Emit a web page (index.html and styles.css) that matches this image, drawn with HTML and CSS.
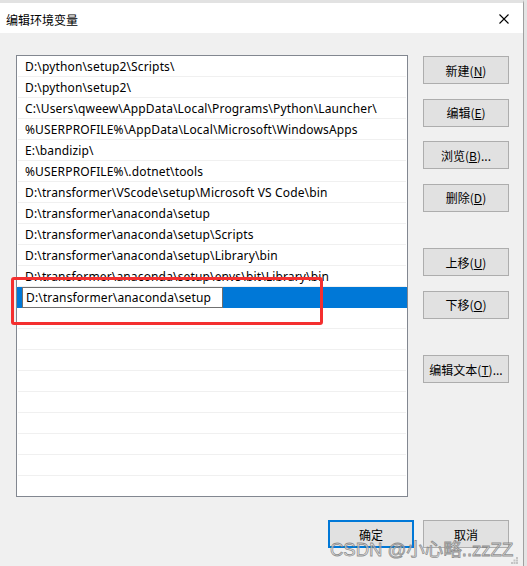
FILE: index.html
```html
<!DOCTYPE html>
<html lang="zh-CN">
<head>
<meta charset="utf-8">
<title>编辑环境变量</title>
<link rel="stylesheet" href="styles.css">
</head>
<body>
<div class="window">
  <div class="titlebar">
    <span class="title">编辑环境变量</span>
    <svg class="close" width="10" height="10" viewBox="0 0 10 10"><path d="M0.5 0.5 L9.5 9.5 M9.5 0.5 L0.5 9.5" stroke="#000" stroke-width="1.1" fill="none"/></svg>
  </div>
  <div class="content">
    <div class="main">
      <div class="list">
        <div class="row">D:\python\setup2\Scripts\</div>
        <div class="row">D:\python\setup2\</div>
        <div class="row">C:\Users\qweew\AppData\Local\Programs\Python\Launcher\</div>
        <div class="row">%USERPROFILE%\AppData\Local\Microsoft\WindowsApps</div>
        <div class="row">E:\bandizip\</div>
        <div class="row">%USERPROFILE%\.dotnet\tools</div>
        <div class="row">D:\transformer\VScode\setup\Microsoft VS Code\bin</div>
        <div class="row">D:\transformer\anaconda\setup</div>
        <div class="row">D:\transformer\anaconda\setup\Scripts</div>
        <div class="row">D:\transformer\anaconda\setup\Library\bin</div>
        <div class="row">D:\transformer\anaconda\setup\envs\bit\Library\bin</div>
        <div class="row selected"><span class="edit">D:\transformer\anaconda\setup</span></div>
        <div class="row"></div>
        <div class="row"></div>
        <div class="row"></div>
        <div class="row"></div>
        <div class="row"></div>
        <div class="row"></div>
        <div class="row"></div>
        <div class="row"></div>
        <div class="row"></div>
      </div>
      <div class="side">
        <button class="btn">新建(<u>N</u>)</button>
        <button class="btn">编辑(<u>E</u>)</button>
        <button class="btn">浏览(<u>B</u>)...</button>
        <button class="btn">删除(<u>D</u>)</button>
        <button class="btn spaced">上移(<u>U</u>)</button>
        <button class="btn">下移(<u>O</u>)</button>
        <button class="btn spaced">编辑文本(<u>T</u>)...</button>
      </div>
    </div>
    <div class="footer">
      <button class="btn default">确定</button>
      <button class="btn">取消</button>
    </div>
  </div>
  <div class="annot"></div>
  <div class="watermark">CSDN @小心略..zzZZ</div>
  <svg class="grip" width="7" height="7" viewBox="0 0 7 7">
    <rect x="5" y="0" width="2" height="2" fill="#c4c4c4"/>
    <rect x="2.5" y="2.5" width="2" height="2" fill="#c4c4c4"/>
    <rect x="5" y="2.5" width="2" height="2" fill="#c4c4c4"/>
    <rect x="0" y="5" width="2" height="2" fill="#c4c4c4"/>
    <rect x="2.5" y="5" width="2" height="2" fill="#c4c4c4"/>
    <rect x="5" y="5" width="2" height="2" fill="#c4c4c4"/>
  </svg>
</div>
</body>
</html>
```

FILE: styles.css
```css
html, body {
  margin: 0;
  padding: 0;
}
body {
  background: #e4e4e4;
  width: 527px;
  height: 566px;
  overflow: hidden;
  font-family: "Segoe UI", "Noto Sans", "Noto Sans CJK SC", sans-serif;
  font-size: 12px;
  color: #000;
}
.window {
  position: relative;
  width: 523px;
  height: 563px;
  border-top: 3px solid #e2e2e2;
  border-right: 1px solid #a0a0a0;
  border-bottom: 1px solid #6e6e6e;
  background: #f0f0f0;
  display: flex;
  flex-direction: column;
}
.titlebar {
  height: 30px;
  background: #fff;
  display: flex;
  align-items: center;
  justify-content: space-between;
  padding: 0 14px 0 6px;
  font-family: "Noto Sans CJK SC", sans-serif;
  font-size: 12px;
}
.title {
  padding-top: 2px;
}
.close {
  display: block;
  margin-top: 1px;
}
.content {
  flex: 1;
  padding: 22px 14px 0 16px;
  display: flex;
  flex-direction: column;
}
.main {
  display: flex;
  gap: 15px;
}
.list {
  width: 390px;
  height: 440px;
  border: 1px solid #828790;
  background: #fff;
  overflow: hidden;
}
.row {
  box-sizing: border-box;
  height: 21px;
  margin: 0 1px;
  border-bottom: 1px solid #f0f0f0;
  padding-left: 7px;
  padding-top: 1px;
  line-height: 20px;
  letter-spacing: 0.15px;
  white-space: nowrap;
}
.row.selected {
  background: #0078d7;
  margin: 0;
  padding-left: 5px;
  padding-top: 0;
  border-bottom-color: #0078d7;
}
.edit {
  display: block;
  box-sizing: border-box;
  width: 201px;
  height: 21px;
  background: #fff;
  border: 1px solid #707070;
  padding-left: 3px;
  line-height: 20px;
}
.side {
  display: flex;
  flex-direction: column;
  gap: 14.5px;
  padding-top: 1px;
}
.btn {
  box-sizing: border-box;
  width: 86px;
  height: 28px;
  background: #e1e1e1;
  border: 1px solid #adadad;
  font-family: "Noto Sans CJK SC", sans-serif;
  font-size: 12px;
  color: #000;
  padding: 0;
  margin: 0;
}
.btn u {
  text-underline-offset: 1px;
}
.btn.spaced {
  margin-top: 22px;
}
.btn.default {
  border: 2px solid #0078d7;
}
.footer {
  display: flex;
  justify-content: flex-end;
  gap: 9px;
  margin-top: 23px;
}
.annot {
  position: absolute;
  left: 11px;
  top: 274px;
  width: 306px;
  height: 42px;
  border: 3px solid #f42f2f;
  border-radius: 3px;
}
.watermark {
  position: absolute;
  left: 330px;
  top: 532px;
  font-family: "Liberation Sans", "Noto Sans CJK SC", sans-serif;
  font-size: 18.5px;
  color: rgba(235, 235, 235, 0.7);
  -webkit-text-stroke: 0.8px rgba(110, 110, 110, 0.75);
  white-space: nowrap;
}
.grip {
  position: absolute;
  right: 5px;
  bottom: 2px;
}
```
